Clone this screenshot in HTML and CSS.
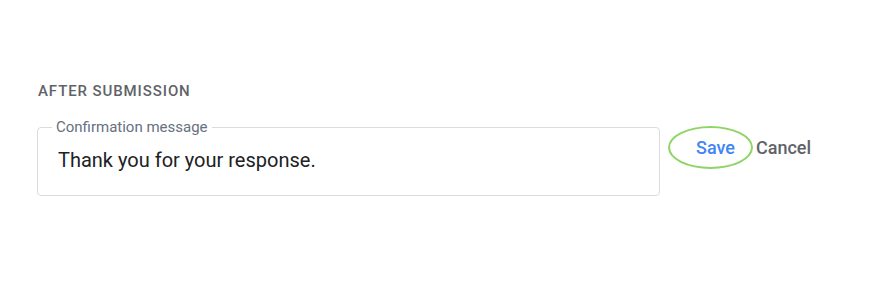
FILE: index.html
```html
<!DOCTYPE html>
<html>
<head>
<meta charset="utf-8">
<link rel="stylesheet" href="styles.css">
</head>
<body>
<section class="page">
  <h2 class="heading">AFTER SUBMISSION</h2>
  <div class="row">
    <div class="field">
      <span class="legend">Confirmation message</span>
      <span class="value">Thank you for your response.</span>
    </div>
    <button class="btn save">Save</button>
    <button class="btn cancel">Cancel</button>
  </div>
</section>
</body>
</html>
```
FILE: styles.css
```css
html, body {
  margin: 0;
  padding: 0;
  background: #ffffff;
}
.page {
  padding: 82px 0 0 38px;
  font-family: Roboto, "Liberation Sans", sans-serif;
}
.heading {
  margin: 0;
  font-size: 15px;
  line-height: 18px;
  font-weight: 500;
  letter-spacing: 0.9px;
  color: #5f6368;
}
.row {
  margin-top: 27px;
  margin-left: -1px;
  display: flex;
  align-items: flex-start;
}
.field {
  position: relative;
  box-sizing: border-box;
  width: 623px;
  height: 69px;
  border: 1px solid #dadce0;
  border-radius: 4px;
  display: flex;
  align-items: center;
  padding: 0 0 4px 20px;
}
.legend {
  position: absolute;
  top: -10px;
  left: 14px;
  padding: 0 4px;
  background: #ffffff;
  font-size: 15px;
  line-height: 18px;
  color: #667080;
}
.value {
  font-size: 20px;
  line-height: 24px;
  color: #202124;
}
.btn {
  font-family: Roboto, "Liberation Sans", sans-serif;
  font-weight: 500;
  font-size: 18px;
  background: none;
  cursor: pointer;
}
.save {
  box-sizing: border-box;
  margin: -1px 0 0 8px;
  width: 85px;
  height: 43px;
  border: 2px solid #8ed565;
  border-radius: 50%;
  padding: 0 0 0 10px;
  color: #4285f4;
}
.cancel {
  border: none;
  padding: 0;
  margin: -1px 0 0 3px;
  height: 43px;
  color: #5f6368;
}
```
